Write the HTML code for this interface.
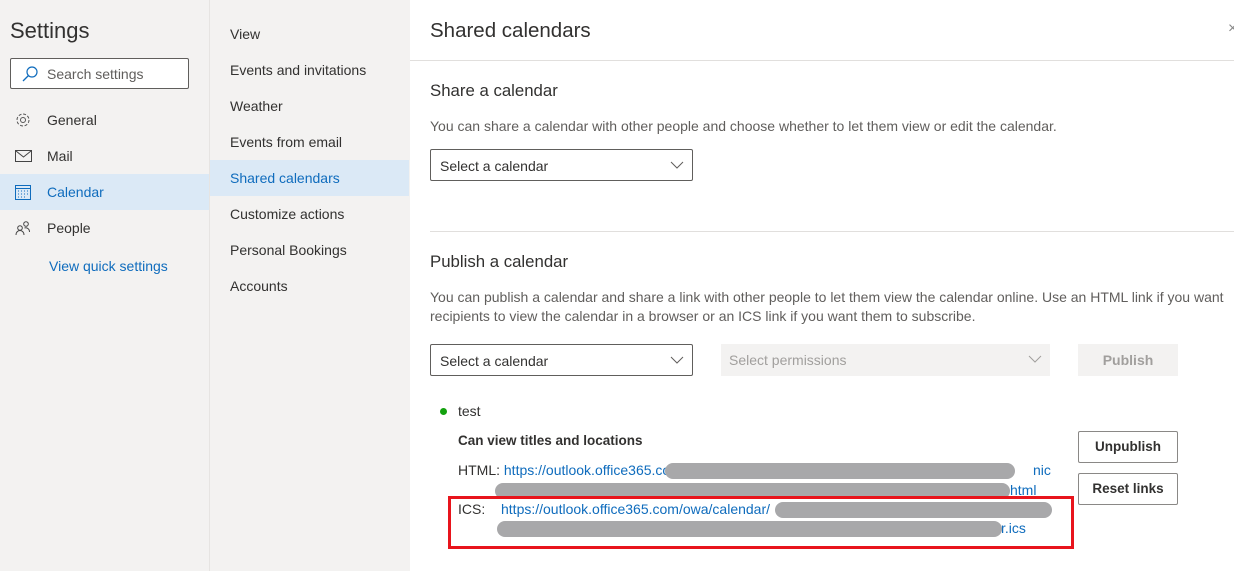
<!DOCTYPE html>
<html><head><style>
*{margin:0;padding:0;box-sizing:border-box}
body{width:1234px;height:571px;overflow:hidden;font-family:"Liberation Sans",sans-serif;color:#323130;font-size:14px;position:relative;background:#fff}
.a{position:absolute;white-space:nowrap}
.lnk{color:#0f6cbd}
.blur{position:absolute;background:#a8a8aa;border-radius:9px;height:16px}
.btn{position:absolute;border:1px solid #8a8886;border-radius:2px;background:#fff;font-weight:bold;font-size:13.5px;text-align:center;color:#323130}
.sel{position:absolute;border:1px solid #605e5c;border-radius:2px;height:32px;background:#fff}
.sel span{position:absolute;left:9px;top:8px}
.chev{position:absolute;right:8px;top:8px;width:14px;height:14px}
</style></head><body>
<div class="a" style="left:0;top:0;width:209px;height:571px;background:#f3f2f1"></div>
<div class="a" style="left:209px;top:0;width:1px;height:571px;background:#e6e4e2"></div>
<div class="a" style="left:210px;top:0;width:200px;height:571px;background:#f3f2f1"></div>
<div class="a" style="left:10px;top:18px;font-size:22px">Settings</div>
<div class="a" style="left:10px;top:58px;width:179px;height:31px;border:1px solid #605e5c;border-radius:2px;background:#fff"></div>
<svg class="a" style="left:21px;top:65px" width="18" height="18" viewBox="0 0 18 18"><circle cx="11" cy="7" r="5" fill="none" stroke="#0f6cbd" stroke-width="1.2"/><path d="M7.5 10.5L2 16" stroke="#0f6cbd" stroke-width="1.3"/></svg>
<div class="a" style="left:47px;top:66px;color:#605e5c">Search settings</div>
<svg class="a" style="left:15px;top:112px" width="16" height="16" viewBox="0 0 16 16"><circle cx="8" cy="8" r="2.5" fill="none" stroke="#555"/><circle cx="8" cy="8" r="6" fill="none" stroke="#555" stroke-dasharray="3 1.7"/></svg>
<div class="a" style="left:47px;top:112px">General</div>
<svg class="a" style="left:15px;top:150px" width="17" height="13" viewBox="0 0 17 13"><rect x="0.5" y="0.5" width="16" height="11" fill="none" stroke="#444"/><path d="M1 1l7.5 6L16 1" fill="none" stroke="#444"/></svg>
<div class="a" style="left:47px;top:148px">Mail</div>
<div class="a" style="left:0;top:174px;width:209px;height:36px;background:#dbe9f6"></div>
<svg class="a" style="left:15px;top:184px" width="16" height="16" viewBox="0 0 16 16"><rect x="0.5" y="1.5" width="15" height="14" fill="none" stroke="#0f6cbd"/><path d="M0.5 4.5h15" stroke="#0f6cbd"/><path d="M3 7h1M6 7h1M9 7h1M12 7h1M3 10h1M6 10h1M9 10h1M12 10h1M3 13h1M6 13h1M9 13h1" stroke="#0f6cbd"/></svg>
<div class="a lnk" style="left:47px;top:184px">Calendar</div>
<svg class="a" style="left:15px;top:220px" width="16" height="16" viewBox="0 0 16 16"><circle cx="5" cy="8" r="2.3" fill="none" stroke="#444"/><path d="M1 15c0-3 2-4.5 4-4.5s4 1.5 4 4.5" fill="none" stroke="#444"/><circle cx="11" cy="4" r="2.3" fill="none" stroke="#444"/><path d="M9.5 8c1.5-.5 5 0 5 4" fill="none" stroke="#444"/></svg>
<div class="a" style="left:47px;top:220px">People</div>
<div class="a lnk" style="left:49px;top:258px">View quick settings</div>

<div class="a" style="left:230px;top:26px">View</div>
<div class="a" style="left:230px;top:62px">Events and invitations</div>
<div class="a" style="left:230px;top:98px">Weather</div>
<div class="a" style="left:230px;top:134px">Events from email</div>
<div class="a" style="left:210px;top:160px;width:199px;height:36px;background:#dbe9f6"></div>
<div class="a lnk" style="left:230px;top:170px">Shared calendars</div>
<div class="a" style="left:230px;top:206px">Customize actions</div>
<div class="a" style="left:230px;top:242px">Personal Bookings</div>
<div class="a" style="left:230px;top:278px">Accounts</div>

<div class="a" style="left:430px;top:19px;font-size:20.5px">Shared calendars</div>
<div class="a" style="left:1228px;top:20px;font-size:16px;color:#888">×</div>
<div class="a" style="left:410px;top:60px;width:824px;height:1px;background:#e1dfdd"></div>
<div class="a" style="left:430px;top:81px;font-size:16.8px">Share a calendar</div>
<div class="a" style="left:430px;top:118px;color:#605e5c;font-size:14px">You can share a calendar with other people and choose whether to let them view or edit the calendar.</div>
<div class="sel" style="left:430px;top:149px;width:263px"><span>Select a calendar</span><svg class="chev" viewBox="0 0 14 14"><path d="M1 4l6 6 6-6" fill="none" stroke="#605e5c"/></svg></div>
<div class="a" style="left:430px;top:231px;width:804px;height:1px;background:#e1dfdd"></div>
<div class="a" style="left:430px;top:252px;font-size:16.8px">Publish a calendar</div>
<div class="a" style="left:430px;top:288px;color:#605e5c;font-size:14px;line-height:19px">You can publish a calendar and share a link with other people to let them view the calendar online. Use an HTML link if you want<br>recipients to view the calendar in a browser or an ICS link if you want them to subscribe.</div>
<div class="sel" style="left:430px;top:344px;width:263px"><span>Select a calendar</span><svg class="chev" viewBox="0 0 14 14"><path d="M1 4l6 6 6-6" fill="none" stroke="#605e5c"/></svg></div>
<div class="a" style="left:721px;top:344px;width:329px;height:32px;background:#f3f2f1"><span class="a" style="left:8px;top:8px;color:#a19f9d">Select permissions</span><svg class="chev" viewBox="0 0 14 14"><path d="M1 4l6 6 6-6" fill="none" stroke="#a19f9d"/></svg></div>
<div class="a" style="left:1078px;top:344px;width:100px;height:32px;background:#f3f2f1;color:#a19f9d;font-weight:bold;text-align:center;line-height:32px">Publish</div>

<div class="a" style="left:440px;top:408px;width:7px;height:7px;border-radius:50%;background:#13a10e"></div>
<div class="a" style="left:458px;top:403px">test</div>
<div class="a" style="left:458px;top:433px;font-weight:bold;font-size:13.5px">Can view titles and locations</div>
<div class="a" style="left:458px;top:462px;font-size:14px">HTML: <span class="lnk">https://outlook.office365.com/owa/calendar/6</span></div>
<div class="a lnk" style="left:1033px;top:462px;font-size:14px">nic</div>
<div class="blur" style="left:665px;top:463px;width:350px"></div>
<div class="blur" style="left:495px;top:483px;width:515px"></div>
<div class="a lnk" style="left:1010px;top:482px;font-size:14px">html</div>
<div class="a" style="left:458px;top:501px;font-size:14px">ICS:</div>
<div class="a lnk" style="left:501px;top:501px;font-size:14px">https://outlook.office365.com/owa/calendar/</div>
<div class="blur" style="left:775px;top:502px;width:277px"></div>
<div class="blur" style="left:497px;top:521px;width:505px"></div>
<div class="a lnk" style="left:1001px;top:520px;font-size:14px">r.ics</div>
<div class="a" style="left:448px;top:496px;width:626px;height:53px;border:3px solid #e8141c"></div>
<div class="btn" style="left:1078px;top:431px;width:100px;height:32px;line-height:30px">Unpublish</div>
<div class="btn" style="left:1078px;top:473px;width:100px;height:32px;line-height:30px">Reset links</div>
</body></html>
